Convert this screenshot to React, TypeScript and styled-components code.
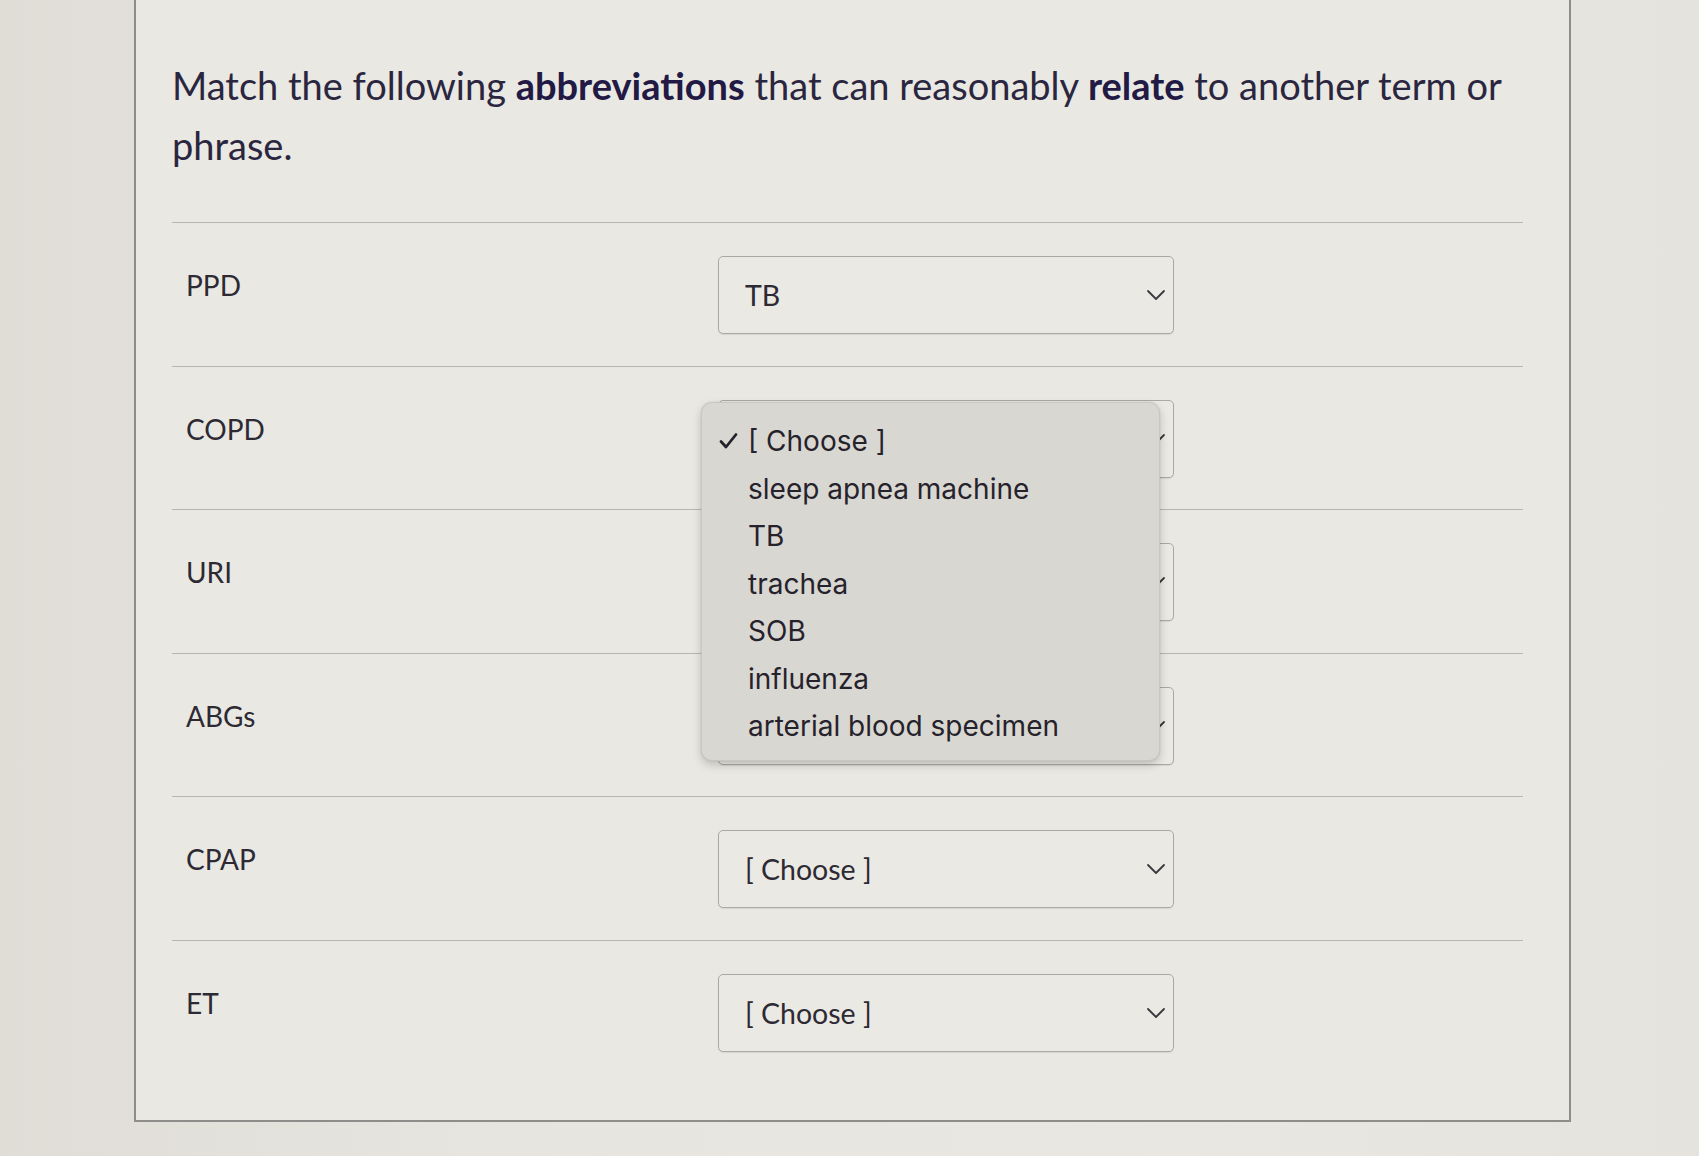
import React from "react";
import styled, { createGlobalStyle } from "styled-components";

const Global = createGlobalStyle`
  html, body { margin: 0; padding: 0; }
  body { background: #e3e1db; font-family: Lato, "Open Sans", sans-serif; }
`;

const Page = styled.div`
  width: 1699px;
  height: 1156px;
  overflow: hidden;
  padding-left: 134px;
  box-sizing: border-box;
  background: linear-gradient(90deg, #dfddd6 0%, #e6e5df 30%, #e8e7e2 70%, #e4e3dd 100%);
`;

const Card = styled.div`
  width: 1437px;
  height: 1122px;
  box-sizing: border-box;
  background: #e9e8e3;
  border-left: 2px solid #8f8d89;
  border-right: 2px solid #8f8d89;
  border-bottom: 2px solid #8f8d89;
  padding: 55px 46px 0 36px;
`;

const Title = styled.p`
  margin: 0 0 47px 0;
  font-family: Lato, sans-serif;
  font-size: 38px;
  line-height: 60px;
  color: #2b2640;
  b { font-weight: 700; color: #221a44; }
`;

const Row = styled.div<{ $last?: boolean }>`
  display: grid;
  grid-template-columns: 544px 456px;
  align-items: start;
  height: ${(p) => (p.$last ? "176px" : "143.5px")};
  box-sizing: border-box;
  padding: 33px 0 0 2px;
  border-top: 1.5px solid #b8b6b1;
`;

const Label = styled.div`
  font-family: Lato, sans-serif;
  font-size: 28px;
  line-height: 40px;
  color: #2d2a33;
  padding: 9px 0 0 12px;
`;

const SelectWrap = styled.div`
  position: relative;
`;

const Select = styled.div`
  height: 78px;
  box-sizing: border-box;
  border: 1.5px solid #aba9a5;
  border-radius: 5px;
  background: #eae9e4;
  display: flex;
  align-items: center;
  justify-content: space-between;
  padding: 0 7px 0 26px;
  font-family: Lato, sans-serif;
  font-size: 28.5px;
  color: #2d2a33;
  box-shadow: 0 1px 1px rgba(0, 0, 0, 0.08);
`;

const Menu = styled.div`
  position: absolute;
  top: 2px;
  left: -17px;
  width: 459px;
  box-sizing: border-box;
  padding: 15px 0 10px 0;
  background: #d9d7d2;
  border: 1px solid #c9c7c2;
  border-radius: 11px;
  box-shadow: 0 4px 10px rgba(0, 0, 0, 0.18), 0 0 2px rgba(0, 0, 0, 0.1);
  z-index: 2;
`;

const Item = styled.div`
  display: flex;
  align-items: center;
  height: 47.5px;
  font-family: Inter, "Noto Sans", sans-serif;
  font-size: 28px;
  color: #26222b;
`;

const CheckSlot = styled.span`
  width: 46px;
  flex: none;
  display: flex;
  justify-content: flex-end;
  padding-right: 10px;
  box-sizing: border-box;
`;

const Chevron = () => (
  <svg width="20" height="12" viewBox="0 0 20 12">
    <polyline points="2,2 10,10 18,2" fill="none" stroke="#3a3840" strokeWidth="1.8" strokeLinecap="round" strokeLinejoin="round" />
  </svg>
);

const Check = () => (
  <svg width="19" height="18" viewBox="0 0 19 18">
    <polyline points="2,9.5 7,15 17,2.5" fill="none" stroke="#26222b" strokeWidth="2.8" strokeLinecap="round" strokeLinejoin="round" />
  </svg>
);

const rows: { label: string; value: string; open?: boolean }[] = [
  { label: "PPD", value: "TB" },
  { label: "COPD", value: "", open: true },
  { label: "URI", value: "" },
  { label: "ABGs", value: "" },
  { label: "CPAP", value: "[ Choose ]" },
  { label: "ET", value: "[ Choose ]" },
];

const options = [
  "[ Choose ]",
  "sleep apnea machine",
  "TB",
  "trachea",
  "SOB",
  "influenza",
  "arterial blood specimen",
];

export default function App() {
  return (
    <>
      <Global />
      <Page>
        <Card>
          <Title>
            Match the following <b>abbreviations</b> that can reasonably <b>relate</b> to another term or
            <br />
            phrase.
          </Title>
          {rows.map((r, i) => (
            <Row key={r.label} $last={i === rows.length - 1}>
              <Label>{r.label}</Label>
              <SelectWrap>
                <Select>
                  <span>{r.value}</span>
                  <Chevron />
                </Select>
                {r.open && (
                  <Menu>
                    {options.map((o, j) => (
                      <Item key={o}>
                        <CheckSlot>{j === 0 && <Check />}</CheckSlot>
                        {o}
                      </Item>
                    ))}
                  </Menu>
                )}
              </SelectWrap>
            </Row>
          ))}
        </Card>
      </Page>
    </>
  );
}
